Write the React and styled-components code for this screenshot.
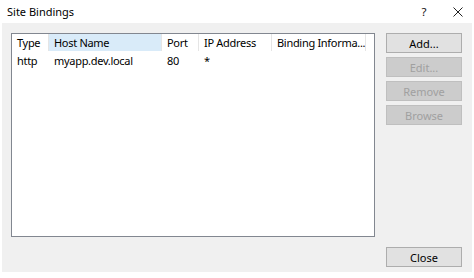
import React from 'react'
import styled, { createGlobalStyle } from 'styled-components'

const Global = createGlobalStyle`
  html, body { margin: 0; padding: 0; background: #fff; overflow: hidden; }
  body { font-family: "Noto Sans", "Open Sans", sans-serif; font-size: 11px; color: #000; }
`

const Window = styled.div`
  width: 474px;
  height: 278px;
  box-sizing: border-box;
  background: #fff;
  padding: 0 2px 6px 2px;
  display: flex;
  flex-direction: column;
`

const TitleBar = styled.div`
  height: 23px;
  display: grid;
  grid-template-columns: 1fr 12px 12px;
  column-gap: 22px;
  align-items: center;
  padding: 0 8px 0 5px;
  flex-shrink: 0;
`

const Title = styled.span`
  font-size: 11px;
`

const TitleButton = styled.span`
  font-size: 11.5px;
  color: #111;
  display: flex;
  justify-content: center;
  align-items: center;
`

const Body = styled.div`
  flex: 1;
  min-height: 0;
  background: #f0f0f0;
  display: grid;
  grid-template-columns: 364px 76px;
  grid-template-rows: 1fr auto;
  column-gap: 11px;
  row-gap: 10px;
  padding: 10px 10px 5px 9px;
`

const List = styled.div`
  background: #fff;
  border: 1px solid #828790;
  display: flex;
  flex-direction: column;
`

const Row = styled.div`
  display: flex;
  height: ${p => (p.$head ? '17px' : '18px')};
  align-items: center;
`

const Cell = styled.div`
  flex: 0 0 ${p => p.$w}px;
  height: 100%;
  box-sizing: border-box;
  padding-left: 5px;
  display: flex;
  align-items: center;
  white-space: nowrap;
  letter-spacing: -0.3px;
  background: ${p => (p.$hot ? '#d9ebf9' : 'transparent')};
  border-right: ${p => (p.$head ? '1px solid #e5e5e5' : 'none')};
`

const Buttons = styled.div`
  display: flex;
  flex-direction: column;
  gap: 4px;
`

const Button = styled.button`
  height: 20px;
  width: 76px;
  box-sizing: border-box;
  font-family: inherit;
  font-size: 11px;
  padding: 0;
  border: 1px solid ${p => (p.disabled ? '#bfbfbf' : '#adadad')};
  color: ${p => (p.disabled ? '#a0a0a0' : '#000')};
  background: ${p => (p.disabled ? '#cccccc' : '#e1e1e1')};
`

const Footer = styled.div`
  grid-column: 2;
`

const columns = [
  { name: 'Type', w: 37 },
  { name: 'Host Name', w: 113, hot: true },
  { name: 'Port', w: 37 },
  { name: 'IP Address', w: 73 },
  { name: 'Binding Informa...', w: 78 },
]

const rows = [['http', 'myapp.dev.local', '80', '*', '']]

export default function App() {
  return (
    <>
      <Global />
      <Window>
        <TitleBar>
          <Title>Site Bindings</Title>
          <TitleButton>?</TitleButton>
          <TitleButton>
            <svg width="10" height="10" viewBox="0 0 10 10">
              <path d="M0.5 0.5L9.5 9.5M9.5 0.5L0.5 9.5" stroke="#222" strokeWidth="1" />
            </svg>
          </TitleButton>
        </TitleBar>
        <Body>
          <List>
            <Row $head>
              {columns.map(c => (
                <Cell key={c.name} $w={c.w} $hot={c.hot} $head>{c.name}</Cell>
              ))}
            </Row>
            {rows.map((r, i) => (
              <Row key={i}>
                {r.map((v, j) => (
                  <Cell key={j} $w={columns[j].w}>{v}</Cell>
                ))}
              </Row>
            ))}
          </List>
          <Buttons>
            <Button>Add...</Button>
            <Button disabled>Edit...</Button>
            <Button disabled>Remove</Button>
            <Button disabled>Browse</Button>
          </Buttons>
          <Footer>
            <Button>Close</Button>
          </Footer>
        </Body>
      </Window>
    </>
  )
}
